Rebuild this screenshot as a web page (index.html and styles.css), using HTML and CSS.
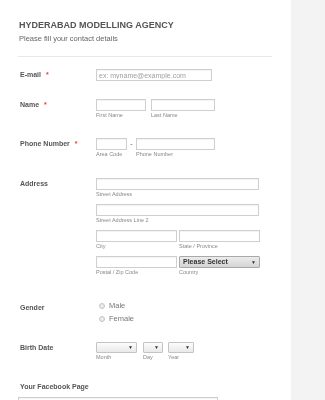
FILE: index.html
```html
<!DOCTYPE html>
<html lang="en">

<head>
    <meta charset="utf-8">
    <meta name="viewport" content="width=device-width, initial-scale=1.0">
    <title>Hyderabad Modelling Agency</title>
    <link rel="stylesheet" href="styles.css">
</head>

<body>
    <div class="page">
        <main class="form">
            <header class="form-head">
                <h1>HYDERABAD MODELLING AGENCY</h1>
                <p>Please fill your contact details</p>
            </header>

            <ul class="fields">
                <li class="field f-email">
                    <label class="label">E-mail <span class="req">*</span></label>
                    <div class="inputs">
                        <input class="text w-email" type="email" placeholder="ex: myname@example.com">
                    </div>
                </li>

                <li class="field f-name">
                    <label class="label">Name <span class="req">*</span></label>
                    <div class="inputs row gap5">
                        <span class="sub"><input class="text w-first" type="text"><small>First Name</small></span>
                        <span class="sub"><input class="text w-last" type="text"><small>Last Name</small></span>
                    </div>
                </li>

                <li class="field f-phone">
                    <label class="label">Phone Number <span class="req">*</span></label>
                    <div class="inputs row">
                        <span class="sub"><input class="text w-area" type="text"><small>Area Code</small></span>
                        <span class="dash">-</span>
                        <span class="sub"><input class="text w-phone" type="text"><small>Phone Number</small></span>
                    </div>
                </li>

                <li class="field f-address">
                    <label class="label">Address</label>
                    <div class="inputs stack">
                        <span class="sub"><input class="text w-street" type="text"><small>Street Address</small></span>
                        <span class="sub"><input class="text w-street" type="text"><small>Street Address Line 2</small></span>
                        <div class="row gap2">
                            <span class="sub"><input class="text w-half" type="text"><small>City</small></span>
                            <span class="sub"><input class="text w-half" type="text"><small>State / Province</small></span>
                        </div>
                        <div class="row gap2">
                            <span class="sub"><input class="text w-half" type="text"><small>Postal / Zip Code</small></span>
                            <span class="sub"><span class="select country w-half">Please Select</span><small>Country</small></span>
                        </div>
                    </div>
                </li>

                <li class="field f-gender">
                    <label class="label">Gender</label>
                    <div class="inputs radios">
                        <label class="radio"><input type="radio" name="gender"> Male</label>
                        <label class="radio"><input type="radio" name="gender"> Female</label>
                    </div>
                </li>

                <li class="field f-birth">
                    <label class="label">Birth Date</label>
                    <div class="inputs row">
                        <span class="sub"><span class="select w-month"></span><small>Month</small></span>
                        <span class="sub gap-l6"><span class="select w-day"></span><small>Day</small></span>
                        <span class="sub gap-l5"><span class="select w-year"></span><small>Year</small></span>
                    </div>
                </li>

                <li class="field f-facebook">
                    <label class="label">Your Facebook Page</label>
                    <input class="text w-fb" type="text">
                </li>
            </ul>
        </main>

        <aside class="side"></aside>
    </div>
</body>

</html>
```

FILE: styles.css
```css
* {
    box-sizing: border-box;
}

body {
    margin: 0;
    font-family: "Liberation Sans", Arial, sans-serif;
    color: #555;
    background: #fff;
}

.page {
    display: flex;
    min-height: 400px;
    will-change: transform;
}

.form {
    width: 291px;
    flex: none;
}

.side {
    flex: 1;
    background-color: #f3f3f3;
}

/* header */

.form-head {
    margin: 0 19px 0 18px;
    padding: 19px 0 12px 1px;
    border-bottom: 1px solid #e8e8e8;
}

.form-head h1 {
    margin: 0;
    font-size: 9px;
    line-height: 12px;
    font-weight: bold;
    color: #555;
}

.form-head p {
    margin: 3px 0 0;
    font-size: 7.5px;
    line-height: 10px;
    color: #666;
}

/* fields */

.fields {
    list-style: none;
    margin: 0;
    padding: 0 0 0 20px;
}

.field {
    display: flex;
    align-items: flex-start;
}

.f-email { margin-top: 12px; }
.f-name { margin-top: 18px; }
.f-phone { margin-top: 19px; }
.f-address { margin-top: 20px; }
.f-gender { margin-top: 23px; }
.f-birth { margin-top: 17px; }
.f-facebook { margin-top: 20px; flex-direction: column; }

.label {
    width: 76px;
    flex: none;
    font-size: 7px;
    line-height: 12px;
    font-weight: bold;
    color: #555;
}

.req {
    color: #e84040;
    margin-left: 3px;
}

.inputs {
    display: flex;
}

.row {
    display: flex;
    align-items: flex-start;
}

.gap5 { gap: 5px; }
.gap2 { gap: 2px; }
.gap-l6 { margin-left: 6px; }
.gap-l5 { margin-left: 5px; }

.stack {
    flex-direction: column;
    gap: 6px;
}

.sub {
    display: flex;
    flex-direction: column;
}

.sub small {
    font-size: 5.5px;
    line-height: 7px;
    margin-top: 1px;
    color: #888;
}

.text {
    display: block;
    height: 12px;
    margin: 0;
    padding: 0 2px;
    border: 1px solid #cfcfcf;
    border-radius: 0;
    background: #fff;
    box-shadow: inset 0 1px 1px rgba(0, 0, 0, .05);
    font-family: "Liberation Sans", Arial, sans-serif;
    font-size: 7px;
    color: #333;
    outline: none;
}

.text::placeholder {
    color: #a0a0a0;
}

.w-email { width: 116px; }
.w-first { width: 50px; }
.w-last { width: 64px; }
.w-area { width: 31px; }
.w-phone { width: 79px; }
.w-street { width: 163px; }
.w-half { width: 81px; }
.w-month { width: 41px; }
.w-day { width: 20px; }
.w-year { width: 26px; }
.w-fb { width: 200px; margin: 4px 0 0 -2px; }

.dash {
    width: 9px;
    text-align: center;
    font-size: 7px;
    line-height: 12px;
    color: #555;
}

/* selects */

.select {
    position: relative;
    display: block;
    height: 11px;
    border: 1px solid #c4c4c4;
    border-radius: 1px;
    background: linear-gradient(#fcfcfc, #e9e9e9);
}

.select::after {
    content: "\25BC";
    position: absolute;
    right: 3px;
    top: 0;
    font-size: 5px;
    line-height: 9px;
    color: #333;
}

.country {
    height: 12px;
    padding-left: 3px;
    border-color: #a9a9a9;
    background: linear-gradient(#ececec, #d4d4d4);
    font-size: 7px;
    line-height: 10px;
    font-weight: bold;
    color: #333;
}

.country::after {
    line-height: 10px;
}

/* radios */

.radios {
    flex-direction: column;
    padding-left: 3px;
}

.radio {
    display: flex;
    align-items: center;
    gap: 4px;
    font-size: 7.5px;
    line-height: 13px;
    color: #777;
}

.radio input {
    appearance: none;
    width: 6px;
    height: 6px;
    margin: 0;
    border: 1px solid #c4c4c4;
    border-radius: 50%;
    background: radial-gradient(#f4f4f4, #e0e0e0);
}

.f-gender .label {
    margin-top: 3px;
}
```
